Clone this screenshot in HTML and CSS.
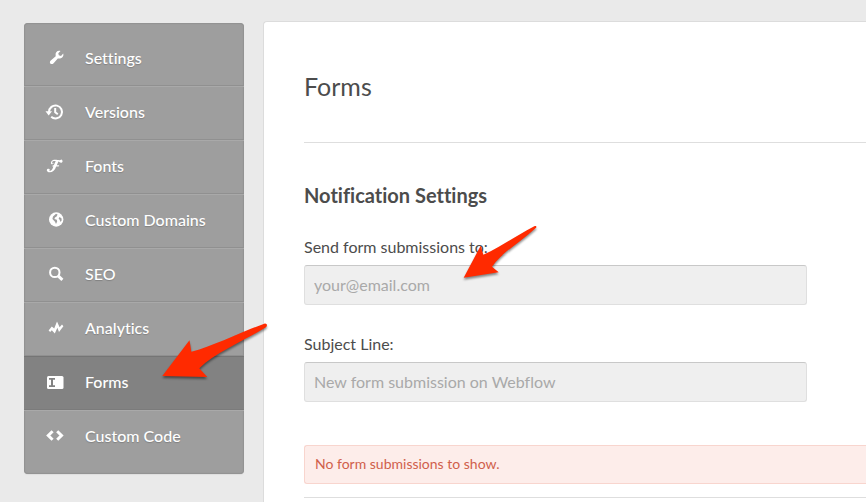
FILE: index.html
```html
<!DOCTYPE html>
<html lang="en">

<head>
    <meta charset="UTF-8">
    <meta name="viewport" content="width=device-width, initial-scale=1.0">
    <title>Forms</title>
    <link rel="stylesheet" href="styles.css">
</head>

<body>
    <div class="page">
        <nav class="sidebar">
            <a class="item" href="#settings">
                <svg class="icon" viewBox="0 0 20 20">
                    <path d="M18.2 5.6 16 8 13.8 7.3 13.3 5.2 15.5 3C13 2 10.2 3.8 10.6 7L10.7 8.2 5.8 12.4C3.4 14.6 6.4 17.6 8.6 15.2L12.8 10.4C16.2 11.4 19.2 8.8 18.2 5.6Z" />
                </svg>
                Settings
            </a>
            <a class="item" href="#versions">
                <svg class="icon" viewBox="0 0 20 20">
                    <path class="line" d="M4 10A6.5 6.5 0 1 1 6.2 14.8M10.2 6V10.3L12.8 12.2" />
                    <path d="M.5 9.2H7L3.7 13.4Z" />
                </svg>
                Versions
            </a>
            <a class="item" href="#fonts">
                <svg class="icon" viewBox="0 0 20 20">
                    <path d="M6 6.2C7 3.5 10 3.6 12.5 4 14.5 4.3 15.5 4.2 16.3 3.4 18 4 18.1 6.6 16 6.8 14.8 6.8 14.4 5.8 13.4 5.6L11.8 9.2H14.2L13.7 10.4H11.2C10 14 7.7 16.3 4.6 16.3 1.6 16.3 1 13.5 3 12.8 4.8 12.3 5.5 14.4 4.1 14.8 6.5 15.5 7.7 12.5 8.4 10.4H7.3L7.8 9.2H8.8L10.7 5.1C8.8 4.8 7.4 5.2 7.2 6.5 7 7.6 8.4 7.7 8.8 6.6 8.7 8.9 5.3 8.8 6 6.2Z" />
                </svg>
                Fonts
            </a>
            <a class="item" href="#domains">
                <svg class="icon" viewBox="0 0 20 20">
                    <circle cx="11.2" cy="9.5" r="7.2" />
                    <path class="cut" d="M11 3.8 12.6 4.6 11.6 6.4 10 7.6 9.4 9 11.8 9.8 12.2 11.4 11 14 10 11.8 7.4 9 8 6.4ZM14.6 7 16.6 8.4 16.6 10.6 15.6 12 14.6 9.8 13.6 8.6Z" />
                </svg>
                Custom Domains
            </a>
            <a class="item" href="#seo">
                <svg class="icon" viewBox="0 0 20 20">
                    <circle class="line" cx="9.8" cy="8.4" r="4.7" />
                    <path class="line thick" d="M13.4 12.2 17.4 15.8" />
                </svg>
                SEO
            </a>
            <a class="item" href="#analytics">
                <svg class="icon" viewBox="0 0 20 20">
                    <path d="M3.6 12.6 6.8 8.4 9.2 10.6 12 3.4 14.6 9.2 17 6.6 18.4 8.2 14 14 12.4 9.8 9.8 15.4 6.8 12.2 5.2 14Z" />
                </svg>
                Analytics
            </a>
            <a class="item active" href="#forms">
                <svg class="icon" viewBox="0 0 20 20">
                    <rect x="2" y="4" width="16.5" height="13" rx="1.5" />
                    <path class="cut" d="M4 6H10V7.8H8V13.2H10V15H4V13.2H6V7.8H4Z" />
                </svg>
                Forms
            </a>
            <a class="item" href="#code">
                <svg class="icon" viewBox="0 0 20 20">
                    <path class="line thick" d="M7.6 5.3 3.3 9.5 7.6 13.7M12.2 5.3 16.5 9.5 12.2 13.7" />
                </svg>
                Custom Code
            </a>
        </nav>

        <main class="panel">
            <h1>Forms</h1>
            <form class="notifications">
                <h2>Notification Settings</h2>
                <label for="email">Send form submissions to:</label>
                <input type="email" id="email" name="email" placeholder="your@email.com">
                <label for="subject">Subject Line:</label>
                <input type="text" id="subject" name="subject" placeholder="New form submission on Webflow">
            </form>
            <p class="alert">No form submissions to show.</p>
            <hr>
        </main>

        <!-- pointers over the page -->
        <svg class="arrow arrow-menu" viewBox="0 0 110 62">
            <path d="M2.3 56 29.5 20.3 31.3 31.7C54 26 78 13 104.3 3.7 107 3 108 6 105.5 7.5 84 21 56 32 39.3 48.3L47.3 57Z" />
        </svg>
        <svg class="arrow arrow-field" viewBox="0 0 80 60">
            <path d="M3.7 55.7 20.7 23.7 23.3 32.7C41 25 57 13 74.8 4 76.2 3.5 77 5 75.8 6 61 20 42 30 32 44.7L38.7 50.3Z" />
        </svg>
    </div>
</body>

</html>
```

FILE: styles.css
```css
*,
::before,
::after {
    margin: 0;
    padding: 0;
    box-sizing: border-box;
}

body {
    font-family: Lato, 'Liberation Sans', sans-serif;
    font-size: 16px;
    line-height: 20px;
    font-variant-ligatures: none;
    color: #4c4c4c;
    background-color: #eaeaea;
}

.page {
    position: relative;
    display: flex;
    align-items: flex-start;
    gap: 19px;
    min-height: 100vh;
    padding: 21px 0 0 24px;
    overflow: hidden;
}

.sidebar {
    flex: 0 0 220px;
    margin-top: 2px;
    padding: 9px 0 10px;
    border-radius: 4px;
    background-color: #9e9e9e;
    box-shadow: inset 0 0 1px 1px #929292, 0 1px 1px #dedede;
}

.item {
    display: flex;
    align-items: center;
    gap: 20px;
    height: 54px;
    padding: 0 21px 2px;
    font-weight: 500;
    text-decoration: none;
    color: #fff;
    text-shadow: 0 1px 1px #808080;
    border-top: 1px solid #a9a9a9;
    border-bottom: 1px solid #909090;
}

.item:first-child {
    border-top-color: transparent;
}

.item:last-child {
    border-bottom-color: transparent;
}

.item.active {
    background-color: #828282;
    border-top-color: #757575;
    border-bottom-color: #7b7b7b;
}

.icon {
    width: 20px;
    height: 20px;
    fill: #fff;
}

.line {
    fill: none;
    stroke: #fff;
    stroke-width: 2;
}

.thick {
    stroke-width: 3;
}

.cut {
    fill: #9e9e9e;
}

.active .cut {
    fill: #828282;
}

.panel {
    flex: 1;
    align-self: stretch;
    padding: 48px 0 0 40px;
    border: 1px solid #dcdcdc;
    border-width: 1px 0 0 1px;
    border-top-left-radius: 4px;
    background-color: #fff;
}

h1 {
    padding-bottom: 40px;
    font-size: 25px;
    font-weight: 400;
    line-height: 32px;
    border-bottom: 1px solid #dedede;
}

.notifications {
    padding-top: 40px;
}

h2 {
    margin-bottom: 30px;
    font-size: 20px;
    font-weight: 700;
    line-height: 24px;
}

label {
    display: block;
    margin-bottom: 8px;
}

input {
    display: block;
    width: 100%;
    max-width: 503px;
    height: 40px;
    margin-bottom: 29px;
    padding: 0 9px 2px;
    font: inherit;
    color: #4c4c4c;
    border: 1px solid #dfdfdf;
    border-top-color: #c8c8c8;
    border-radius: 3px;
    background-color: #efefef;
}

input::placeholder {
    color: #a9a9a9;
}

.alert {
    margin: 43px 0 13px;
    padding: 8px 10px 9px;
    font-size: 14px;
    color: #d0604c;
    border: 1px solid #f8d5ce;
    border-width: 1px 0 1px 1px;
    border-radius: 3px 0 0 3px;
    background-color: #fdedea;
}

hr {
    border: 0;
    border-top: 1px solid #dedede;
}

.arrow {
    position: absolute;
    fill: #ff2a00;
    filter: drop-shadow(0 2px 1px rgba(0, 0, 0, .45));
}

.arrow-menu {
    top: 320px;
    left: 160px;
    width: 110px;
    height: 62px;
}

.arrow-field {
    top: 222px;
    left: 460px;
    width: 80px;
    height: 60px;
}
```
